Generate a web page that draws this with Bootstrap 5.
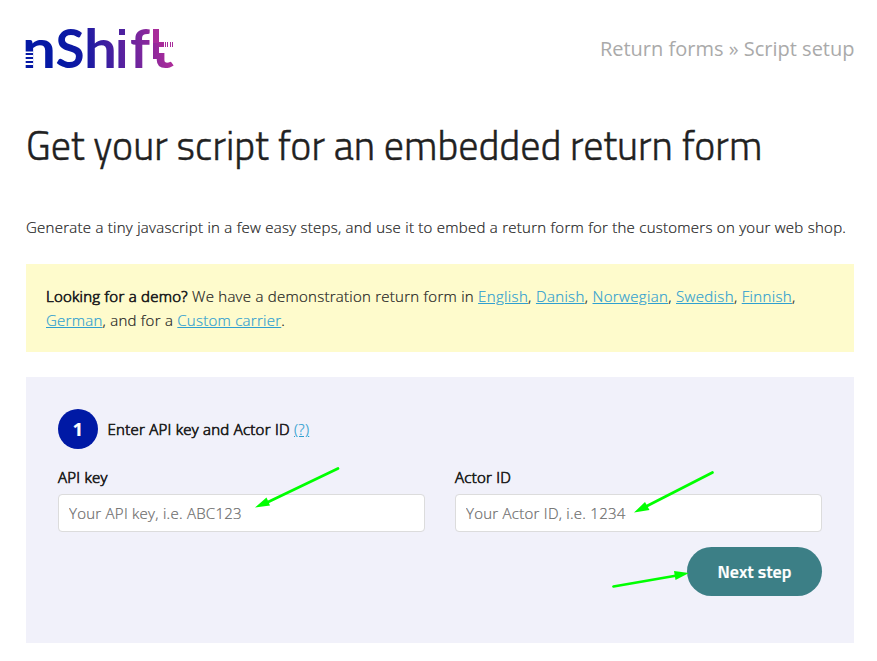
<!DOCTYPE html>
<html lang="en">
<head>
<meta charset="utf-8">
<meta name="viewport" content="width=device-width, initial-scale=1">
<title>Script setup</title>
<link href="https://cdn.jsdelivr.net/npm/bootstrap@5.3.0/dist/css/bootstrap.min.css" rel="stylesheet">
<style>
body{font-family:"Open Sans",sans-serif;font-weight:300;font-size:15px;line-height:24px;letter-spacing:.26px;-webkit-text-stroke:.2px currentColor;color:#212121;background:#fff;overflow:hidden}
.page{padding:28px 23px 0 26px}
.top-bar{height:41px}
.crumbs{font-size:20px;font-weight:400;color:#aaa;letter-spacing:0;-webkit-text-stroke:0;margin-right:-.5px}
.brand-logo{-webkit-text-stroke:0}
.page-title{font-family:"Titillium Web","Roboto",sans-serif;font-weight:300;font-size:40px;line-height:52px;letter-spacing:0;-webkit-text-stroke:.4px currentColor;margin:51px 0 0;white-space:nowrap;color:#212121}
.intro{margin:43px 0 0;white-space:nowrap}
.demo{background:#fefbcc;margin-top:25px;padding:20px;height:88px}
a{color:#2f9fd0}
.demo-langs{letter-spacing:.35px}
.strong-light{-webkit-text-stroke:.7px currentColor}
.step-panel{background:#f1f1fa;margin-top:25px;padding:32px;height:266px}
.step-no{width:40px;height:40px;background:#0019a5;color:#fff;font-weight:700;font-size:18px;letter-spacing:0}
.step-label{margin-left:9.500px}
.fields{margin-top:16px;column-gap:30px}
.fields .form-control{height:38px;margin-top:5px;border:1px solid #dcdcdc;border-radius:4px;padding:6px 10px;font-size:15px;font-weight:300;letter-spacing:.26px}
.fields .form-control::placeholder{color:#6a6a6a;opacity:1}
.btn-next{width:135px;height:49px;margin-top:15px;background:#3c7f86;color:#fff;font-family:"Titillium Web","Roboto",sans-serif;font-weight:600;font-size:18px;letter-spacing:0}
.arrows{left:0;top:0;pointer-events:none}
</style>
<script src="https://cdn.jsdelivr.net/npm/bootstrap@5.3.0/dist/js/bootstrap.bundle.min.js"></script>
</head>
<body>
<div class="page">
  <header class="top-bar d-flex justify-content-between align-items-center">
    <svg class="brand-logo overflow-visible" width="150" height="41" viewBox="26 28 150 41" role="img" aria-label="nShift" letter-spacing="0">
      <defs><linearGradient id="brand" gradientUnits="userSpaceOnUse" x1="60" y1="60" x2="172" y2="42"><stop offset="0" stop-color="#0519a5"/><stop offset=".2" stop-color="#1219a3"/><stop offset=".95" stop-color="#a82c9a"/><stop offset="1" stop-color="#b02e98"/></linearGradient></defs>
      <g font-family="Lato" font-weight="700" font-size="53">
        <text fill="#0519a5" y="68" x="22" textLength="34" lengthAdjust="spacingAndGlyphs">n</text>
        <text fill="url(#brand)" y="68" x="55.500">S</text>
        <text fill="url(#brand)" y="68" x="84" textLength="33" lengthAdjust="spacingAndGlyphs">h</text>
        <text fill="url(#brand)" y="68" x="115">i</text>
        <text fill="url(#brand)" y="68" x="130" textLength="20" lengthAdjust="spacingAndGlyphs">f</text>
        <text fill="url(#brand)" y="68" x="151" textLength="23" lengthAdjust="spacingAndGlyphs">t</text>
      </g>
      <path fill="#fff" d="M117 26h11v13h-11zM159 27h17v26h-17zM150 27h3v24h-3zM25 51.500h8v1.500h-8zM25 55h8v2h-8zM25 59h8v2h-8zM25 63h8v2h-8z"/>
      <path fill="#4d209f" d="M119 29h6v6h-6z"/>
      <path fill="#a82c9a" d="M153 29h6v14h-6zM159 42h5v5h-5zM165 42h1v5h-1zM167 42h1v5h-1zM170 42h1v5h-1zM172 42h1v5h-1z"/>
      <path fill="url(#brand)" d="M153 43h6v16h-6z"/>
    </svg>
    <div class="crumbs">Return forms » Script setup</div>
  </header>
  <h1 class="page-title">Get your script for an embedded return form</h1>
  <p class="intro">Generate a tiny javascript in a few easy steps, and use it to embed a return form for the customers on your web shop.</p>
  <div class="demo"><span class="strong-light">Looking for a demo?</span> We have a demonstration return form in <span class="demo-langs"><a href="#">English</a>, <a href="#">Danish</a>, <a href="#">Norwegian</a>, <a href="#">Swedish</a>, <a href="#">Finnish</a>,</span> <br><a href="#">German</a>, and for a <a href="#">Custom carrier</a>.</div>
  <section class="step-panel">
    <div class="d-flex align-items-center">
      <span class="step-no rounded-circle d-flex align-items-center justify-content-center">1</span>
      <div class="step-label"><span class="strong-light">Enter API key and Actor ID</span> <a href="#">(?)</a></div>
    </div>
    <div class="fields d-flex">
      <div class="flex-fill"><label class="strong-light d-block" for="api">API key</label><input id="api" class="form-control" placeholder="Your API key, i.e. ABC123"></div>
      <div class="flex-fill"><label class="strong-light d-block" for="actor">Actor ID</label><input id="actor" class="form-control" placeholder="Your Actor ID, i.e. 1234"></div>
    </div>
    <div class="d-flex justify-content-end"><button class="btn-next btn rounded-pill border-0 p-0">Next step</button></div>
  </section>
</div>
<svg class="arrows position-absolute" width="877" height="661" viewBox="0 0 877 661" aria-hidden="true">
  <g stroke="#0f0" stroke-width="2.700" stroke-linecap="round"><path d="M338 468.500L266 503M712.500 472.500L645 507M613.500 586.500L677 575.500"/></g>
  <g fill="#0f0"><path d="M255 507.500L266.500 497.500L270 505.500ZM634 512.500L645 502L649.500 510ZM689 573L674 571L675.500 580Z"/></g>
</svg>
</body>
</html>
